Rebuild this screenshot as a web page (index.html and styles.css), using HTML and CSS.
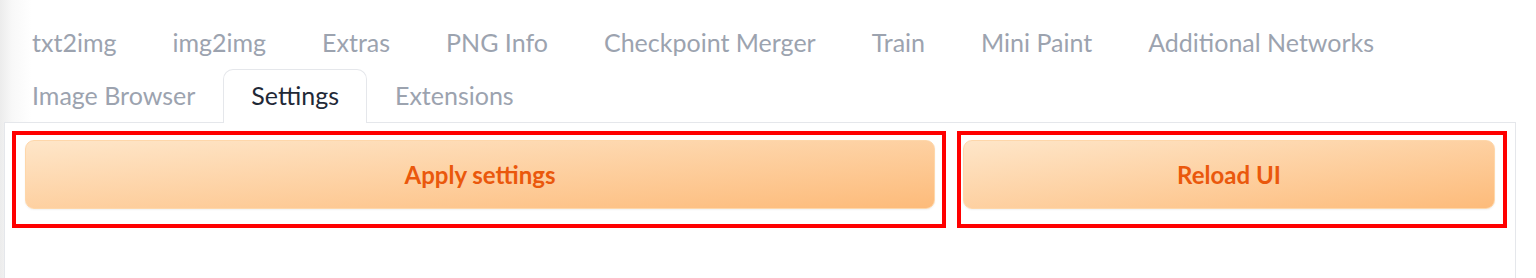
FILE: index.html
```html
<!DOCTYPE HTML>
<html>
<head>
<meta http-equiv="Content-Type" content="text/html; charset=utf-8">
<title>Settings</title>
<link rel="stylesheet" href="styles.css">
</head>
<body>
    <div id="app">
        <!-- tab bar -->
        <div class="tabs">
            <button class="tab">txt2img</button>
            <button class="tab">img2img</button>
            <button class="tab">Extras</button>
            <button class="tab">PNG Info</button>
            <button class="tab">Checkpoint Merger</button>
            <button class="tab">Train</button>
            <button class="tab">Mini Paint</button>
            <button class="tab">Additional Networks</button>
            <button class="tab">Image Browser</button>
            <button class="tab selected">Settings</button>
            <button class="tab">Extensions</button>
        </div>

        <!-- settings panel -->
        <div class="panel">
            <div class="actions">
                <div class="mark markLeft">
                    <button class="primary">Apply settings</button>
                </div>
                <div class="mark markRight">
                    <button class="primary">Reload UI</button>
                </div>
            </div>
        </div>
    </div>
</body>
</html>
```

FILE: styles.css
```css
html,body{
   margin: 0px;
   padding: 0px;
}
body{
   height: 278px;
   overflow: hidden;
   background: linear-gradient(to right, #ececec 0px, #f8f8f8 12px, #ffffff 32px);
   font-family: "Lato", "Noto Sans", sans-serif;
}
#app{
   padding: 16px 20px 0 4px;
}
.tabs{
   display: flex;
   flex-wrap: wrap;
}
.tab{
   font-family: inherit;
   font-size: 25px;
   line-height: 31px;
   color: #9ca3af;
   background: none;
   border: 1px solid transparent;
   border-bottom: none;
   border-radius: 10px 10px 0 0;
   padding: 10px 27px 11px 27px;
   margin: 0;
   cursor: pointer;
}
.tab.selected{
   color: #1f2937;
   background: white;
   border-color: #e5e7eb;
   position: relative;
   margin-bottom: -1px;
   padding-bottom: 12px;
   z-index: 1;
}
.panel{
   border: 1px solid #e5e7eb;
   border-bottom: none;
   height: 147px;
   background: white;
   padding: 8px 8px 0 7px;
}
.actions{
   display: flex;
   gap: 11px;
}
.mark{
   border: 4px solid #ff0000;
   box-sizing: border-box;
}
.markLeft{
   width: 934px;
   padding: 5px 7px 14px 9px;
}
.markRight{
   width: 550px;
   padding: 5px 8px 15px 2px;
}
.primary{
   display: block;
   width: 100%;
   height: 69px;
   font-family: inherit;
   font-size: 24px;
   font-weight: bold;
   color: #ea580c;
   border: 1px solid #fed7aa;
   border-radius: 9px;
   background: linear-gradient(to bottom right, #fee6c9, #fdbb7a);
   box-shadow: 0 1px 2px rgba(0,0,0,0.06);
   cursor: pointer;
}
```
